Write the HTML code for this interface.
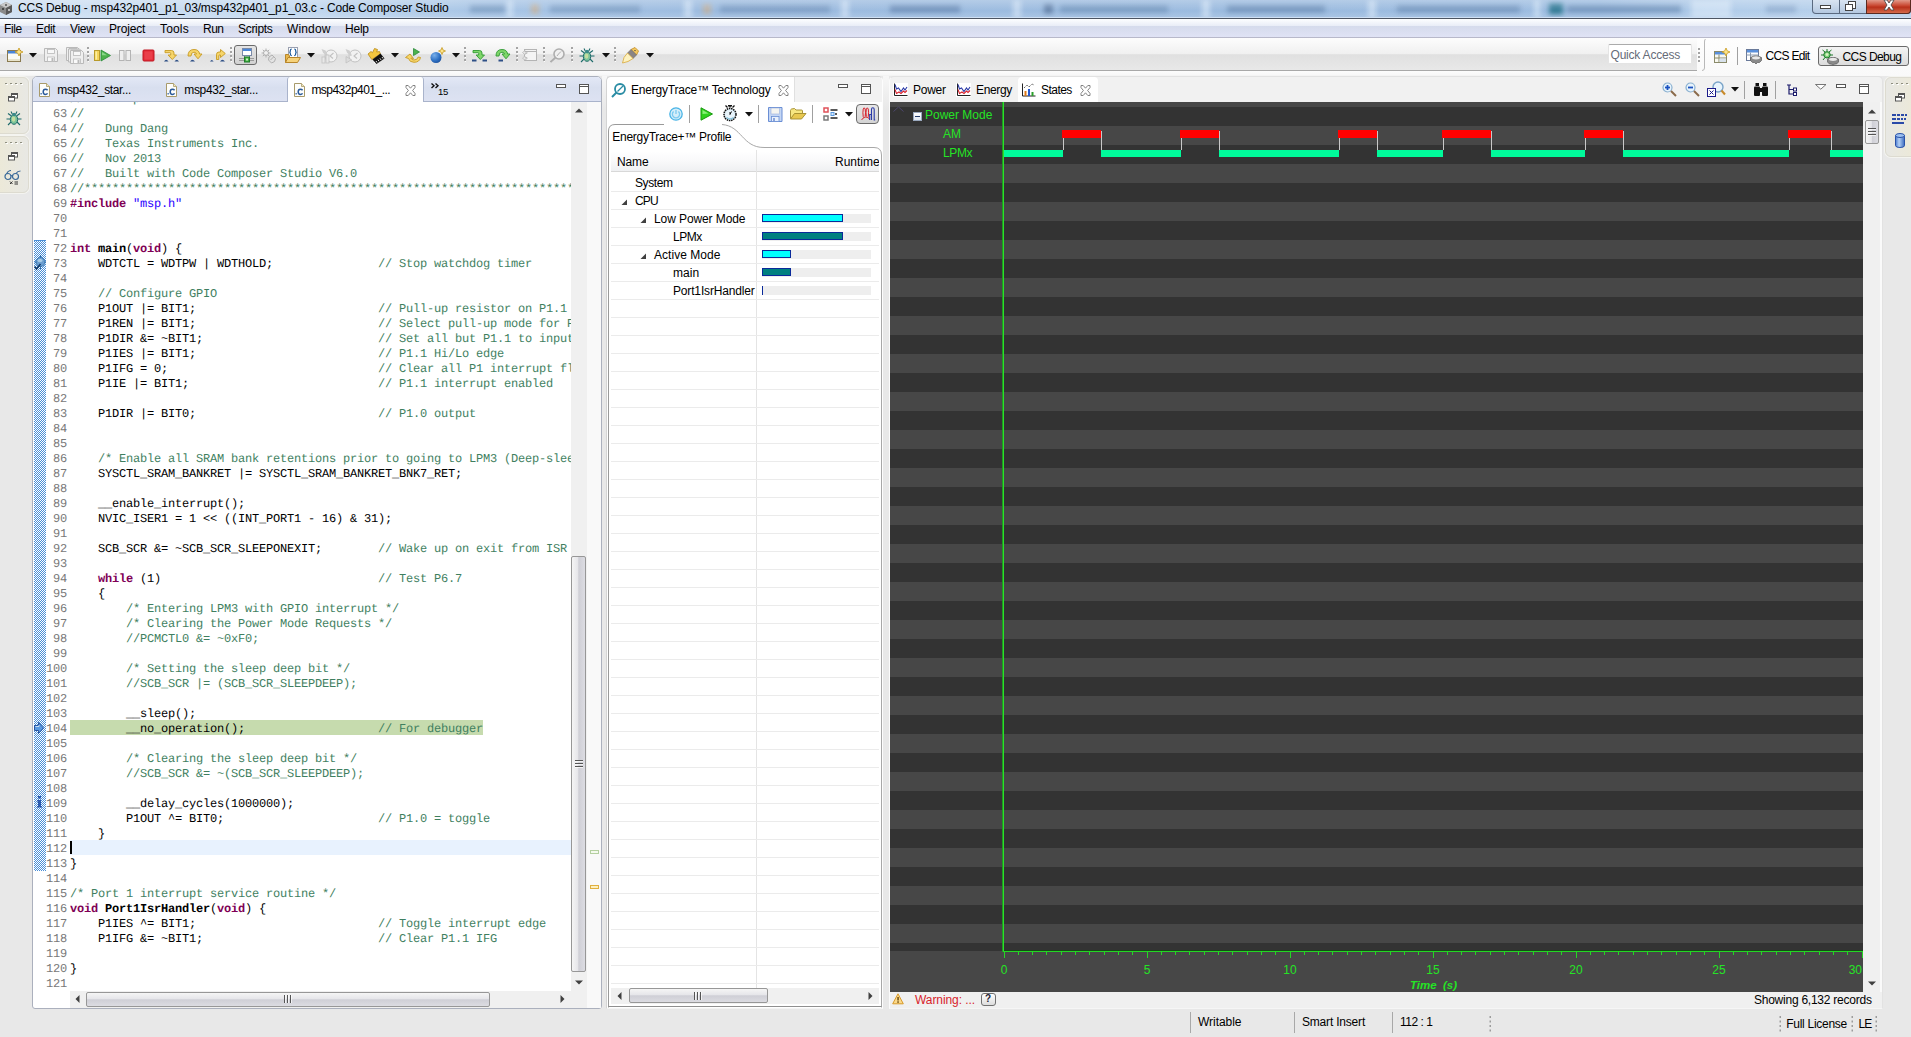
<!DOCTYPE html>
<html><head><meta charset="utf-8"><title>CCS Debug</title><style>
*{box-sizing:border-box;margin:0;padding:0}
html,body{width:1911px;height:1037px;overflow:hidden}
body{position:relative;background:#e8e8e8;font-family:"Liberation Sans",sans-serif;font-size:12px;color:#000}
div,svg{position:absolute}
.t{white-space:nowrap;line-height:14px;font-size:12px}
/* title */
#title{left:0;top:0;width:1911px;height:18px;background:linear-gradient(90deg,#cfe0f2 0,#c2d8ef 300px,#a9c6e6 470px,#9dbce0 700px,#9bbbdf 1300px,#9dbde1 1600px,#b2cdea 1740px,#b9d2ec 1911px);overflow:hidden}
#tline{left:0;top:17px;width:1911px;height:2px;background:linear-gradient(#cfe0f4 50%,#4c5563 50%)}
#menu{left:0;top:19px;width:1911px;height:19px;background:linear-gradient(#fdfeff 0,#e9edf7 38%,#d5dbec 40%,#e0e3f5 100%);border-bottom:1px solid #b8b9ca}
#tool{left:0;top:38px;width:1697px;height:33px;background:linear-gradient(#fdfdfd 0,#f0f0f0 50%,#e0e0e0 52%,#e8e8e8 100%);border-bottom:1px solid #a8a8a8}
#toolw{left:0;top:71px;width:1911px;height:5px;background:linear-gradient(#fcfcfc,#f8f8f8 70%,#f2f2f2)}
/* code */
#code{left:46px;top:102px;width:525px;height:889px;overflow:hidden;background:#fff;font-family:"Liberation Mono",monospace;font-size:12px;letter-spacing:-0.2px;text-rendering:geometricPrecision;white-space:pre}
.ln{left:0;width:525px;height:15px;line-height:19px;overflow:hidden}
.ln.cur .tx{background:#e8f2fe}
.no{display:inline-block;width:21px;height:15px;text-align:right;color:#787878;vertical-align:top}
.tx{display:inline-block;width:501px;height:15px;margin-left:3px;vertical-align:top;overflow:hidden}
.c{color:#3f7f5f}.k{color:#7f0055;font-weight:bold}.s{color:#2a00ff}
.hl{background:#c6dbae;display:inline-block;height:15px;vertical-align:top}
/* chart */
#chart{left:890px;top:102px;width:973px;height:890px;background:#474747;overflow:hidden;font-size:12px}
.dk{left:0;width:973px;background:#333}
.rd{top:28px;height:8px;background:#ff0000}
.gn{top:48px;height:7px;background:#00fa9a}
.cn{width:1px;background:#c8c8c8}
.vline{left:112px;top:0;width:2px;height:850px;background:linear-gradient(90deg,#1f9a1f 50%,#2be02b 50%)}
.axis{left:113px;top:849px;width:860px;height:1px;background:#24d624}
.tk{top:849px;width:1px;background:#24d624}
.tl{top:861px;width:40px;text-align:center;color:#25e425;font-size:12px;line-height:14px}
.tt{left:520px;top:876px;color:#25e425;font-weight:bold;font-style:italic;font-size:11.5px;line-height:14px;white-space:nowrap}
.lb{color:#25e425;font-size:12px;line-height:14px;white-space:nowrap}
.thumbv{border:1px solid #979797;border-radius:2px;background:linear-gradient(90deg,#f5f5f5,#e6e6ea 45%,#cfcfd6 52%,#dcdce2)}
.thumbh{border:1px solid #979797;border-radius:2px;background:linear-gradient(#f5f5f5,#e6e6ea 45%,#cfcfd6 52%,#dcdce2)}
.row{left:611px;width:268px;height:1px;background:#ebebeb}

</style></head><body>
<div id="title">
<div style="left:0;top:0;width:1911px;height:18px;filter:blur(2.5px)">
<div style="left:470px;top:5px;width:35px;height:8px;background:rgba(70,105,150,0.35)"></div>
<div style="left:550px;top:5px;width:90px;height:8px;background:rgba(70,105,150,0.3)"></div>
<div style="left:720px;top:5px;width:110px;height:8px;background:rgba(70,105,150,0.32)"></div>
<div style="left:890px;top:5px;width:70px;height:8px;background:rgba(70,105,150,0.45)"></div>
<div style="left:1060px;top:5px;width:108px;height:8px;background:rgba(70,105,150,0.35)"></div>
<div style="left:1227px;top:5px;width:98px;height:8px;background:rgba(70,105,150,0.4)"></div>
<div style="left:1397px;top:5px;width:123px;height:8px;background:rgba(70,105,150,0.38)"></div>
<div style="left:1567px;top:5px;width:114px;height:8px;background:rgba(70,105,150,0.42)"></div>
<div style="left:1766px;top:5px;width:30px;height:8px;background:rgba(70,105,150,0.25)"></div>
<div style="left:507px;top:0px;width:6px;height:18px;background:rgba(225,238,252,.55)"></div>
<div style="left:684px;top:0px;width:8px;height:18px;background:rgba(225,238,252,.55)"></div>
<div style="left:841px;top:0px;width:8px;height:18px;background:rgba(225,238,252,.55)"></div>
<div style="left:1013px;top:0px;width:8px;height:18px;background:rgba(225,238,252,.55)"></div>
<div style="left:1202px;top:0px;width:8px;height:18px;background:rgba(225,238,252,.55)"></div>
<div style="left:1368px;top:0px;width:8px;height:18px;background:rgba(225,238,252,.55)"></div>
<div style="left:1534px;top:0px;width:6px;height:18px;background:rgba(225,238,252,.55)"></div>
<div style="left:1691px;top:0px;width:40px;height:18px;background:rgba(225,238,252,.55)"></div>
<div style="left:531px;top:4px;width:8px;height:10px;background:rgba(220,170,110,.5)"></div>
<div style="left:703px;top:4px;width:8px;height:10px;background:rgba(220,170,110,.5)"></div>
<div style="left:1044px;top:4px;width:9px;height:10px;background:rgba(60,90,130,.55)"></div>
<div style="left:1549px;top:3px;width:14px;height:12px;background:rgba(30,110,135,.8)"></div>
</div>
<div style="left:0px;top:0px;width:1911px;height:18px;background:linear-gradient(rgba(255,255,255,.25),rgba(255,255,255,0) 60%,rgba(255,255,255,.15))"></div>
<svg style="left:0px;top:1px" width="14" height="15" viewBox="0 0 14 15"><path d="M0 4 L6 1 L12 4 L12 11 L6 14 L0 11Z" fill="#8a8a8a"/><path d="M0 4 L6 7 L12 4 L6 1Z" fill="#c8c8c8"/><path d="M6 7 L6 14 L12 11 L12 4Z" fill="#5a5a5a"/><circle cx="3" cy="8" r="1" fill="#333"/><circle cx="9" cy="9" r="1" fill="#ddd"/><circle cx="6" cy="4" r="1" fill="#555"/></svg>
<div class="t" style="left:18px;top:1px;letter-spacing:-0.160px;">CCS Debug - msp432p401_p1_03/msp432p401_p1_03.c - Code Composer Studio</div>
<div style="left:1812px;top:0px;width:99px;height:14px;border:1px solid #5a6a80;border-top:0;border-radius:0 0 4px 4px;background:linear-gradient(#d9e4f1,#b4c8e0)"></div>
<div style="left:1839px;top:0px;width:1px;height:14px;background:#5a6a80"></div>
<div style="left:1866px;top:0px;width:45px;height:14px;border:1px solid #5a2a20;border-top:0;border-radius:0 0 4px 0;background:linear-gradient(#e29a8a,#c8452e 45%,#b8301a 55%,#d46a4a)"></div>
<div style="left:1820px;top:5px;width:11px;height:4px;border:1px solid #444;background:#fff"></div>
<div style="left:1848px;top:1px;width:8px;height:8px;border:1px solid #444;background:#fff"></div>
<div style="left:1845px;top:4px;width:8px;height:7px;border:1px solid #444;background:#fff"></div>
<svg style="left:1883px;top:0px" width="12" height="11" viewBox="0 0 12 11"><path d="M1 0 L4 0 L6 3 L8 0 L11 0 L8 5 L11 10 L8 10 L6 7 L4 10 L1 10 L4 5Z" fill="#fff" stroke="#444" stroke-width=".8"/></svg>
</div><div id="tline"></div>
<div id="menu">
<div class="t" style="left:4px;top:3px;letter-spacing:-0.400px;">File</div>
<div class="t" style="left:36px;top:3px;letter-spacing:-0.325px;">Edit</div>
<div class="t" style="left:70px;top:3px;letter-spacing:-0.325px;">View</div>
<div class="t" style="left:109px;top:3px;letter-spacing:-0.171px;">Project</div>
<div class="t" style="left:160px;top:3px;letter-spacing:0.160px;">Tools</div>
<div class="t" style="left:203px;top:3px;letter-spacing:-0.533px;">Run</div>
<div class="t" style="left:238px;top:3px;letter-spacing:-0.314px;">Scripts</div>
<div class="t" style="left:287px;top:3px;letter-spacing:0.150px;">Window</div>
<div class="t" style="left:345px;top:3px;letter-spacing:-0.225px;">Help</div>
</div>
<div id="tool">
<svg style="left:7px;top:10px" width="16" height="15" viewBox="0 0 16 15"><rect x="0.5" y="2.5" width="13" height="11" fill="#fbfbf4" stroke="#8a7a50"/><rect x="1" y="3" width="12" height="2.5" fill="#4a86d8"/><rect x="1" y="11" width="12" height="2" fill="#e8e4cc"/><path d="M12 0 L13.2 2.8 L16 4 L13.2 5.2 L12 8 L10.8 5.2 L8 4 L10.8 2.8Z" fill="#fce48a" stroke="#c89a20" stroke-width=".8"/></svg>
<svg style="left:29px;top:15px" width="8" height="5" viewBox="0 0 8 5"><path d="M0 0 L8 0 L4 4.5Z" fill="#111"/></svg>
<svg style="left:44px;top:10px" width="16" height="16" viewBox="0 0 16 16"><path d="M0.5 0.5 h11 l2 2 v11 h-13z" fill="#efefef" stroke="#b9b9b9"/><rect x="3.5" y="1.5" width="7" height="4" fill="#f8f8f8" stroke="#b9b9b9" stroke-width=".8"/><rect x="3.5" y="9" width="7" height="4.5" fill="#fafafa" stroke="#b9b9b9" stroke-width=".8"/><rect x="7.5" y="10" width="2" height="3" fill="#b9b9b9"/></svg>
<svg style="left:66px;top:9px" width="18" height="18" viewBox="0 0 18 18"><path d="M0.5 0.5 h11 l2 2 v11 h-13z" fill="#efefef" stroke="#b9b9b9"/><rect x="3.5" y="1.5" width="7" height="4" fill="#f8f8f8" stroke="#b9b9b9" stroke-width=".8"/><rect x="3.5" y="9" width="7" height="4.5" fill="#fafafa" stroke="#b9b9b9" stroke-width=".8"/><rect x="7.5" y="10" width="2" height="3" fill="#b9b9b9"/><path d="M2.5 2 h11 l2 2 v11 h-13z" fill="#efefef" stroke="#b9b9b9"/><rect x="5.5" y="3" width="7" height="4" fill="#f8f8f8" stroke="#b9b9b9" stroke-width=".8"/><rect x="5.5" y="10.5" width="7" height="4.5" fill="#fafafa" stroke="#b9b9b9" stroke-width=".8"/><rect x="9.5" y="11.5" width="2" height="3" fill="#b9b9b9"/><path d="M4.5 3.5 h11 l2 2 v11 h-13z" fill="#efefef" stroke="#b9b9b9"/><rect x="7.5" y="4.5" width="7" height="4" fill="#f8f8f8" stroke="#b9b9b9" stroke-width=".8"/><rect x="7.5" y="12" width="7" height="4.5" fill="#fafafa" stroke="#b9b9b9" stroke-width=".8"/><rect x="11.5" y="13" width="2" height="3" fill="#b9b9b9"/></svg>
<svg style="left:87px;top:9px" width="3" height="16" viewBox="0 0 3 16"><rect x="0" y="0" width="2" height="2" fill="#a4a4a4"/><rect x="1" y="2" width="1" height="1" fill="#fff"/><rect x="0" y="4" width="2" height="2" fill="#a4a4a4"/><rect x="1" y="6" width="1" height="1" fill="#fff"/><rect x="0" y="8" width="2" height="2" fill="#a4a4a4"/><rect x="1" y="10" width="1" height="1" fill="#fff"/><rect x="0" y="12" width="2" height="2" fill="#a4a4a4"/><rect x="1" y="14" width="1" height="1" fill="#fff"/></svg>
<svg style="left:94px;top:11px" width="18" height="13" viewBox="0 0 18 13"><rect x="0.5" y="1.5" width="5" height="10" fill="#f4d45a" stroke="#b89a2a"/><rect x="1.5" y="2.5" width="1.5" height="8" fill="#fbeea0"/><path d="M7 1 L16.5 6.5 L7 12Z" fill="#4cb24c" stroke="#2a8a3a" stroke-width=".8"/><path d="M8 3 L13 6.3 L8 6.3Z" fill="#8ad88a"/></svg>
<svg style="left:119px;top:11px" width="13" height="13" viewBox="0 0 13 13"><rect x="0.5" y="1.5" width="4.5" height="10" fill="#efefef" stroke="#b4b4b4"/><rect x="7" y="1.5" width="4.5" height="10" fill="#efefef" stroke="#b4b4b4"/></svg>
<svg style="left:142px;top:11px" width="14" height="14" viewBox="0 0 14 14"><rect x="1" y="1" width="11" height="11" rx="1" fill="#e42a36" stroke="#c01824" stroke-width="1"/><rect x="2.500" y="2.500" width="8" height="8" fill="#ea3f4a"/></svg>
<svg style="left:164px;top:10px" width="16" height="15" viewBox="0 0 16 15"><path d="M1 2.5 h6.5 q2.5 0 2.5 2.5 v2 h2.5 l-4.2 4.5 l-4.2 -4.5 h2.6 v-1.5 q0 -.8 -.8 -.8 h-4.9z" fill="#f6d56a" stroke="#c79a22" stroke-width=".9" stroke-linejoin="round"/><path d="M0 13.500 q2.200 -3.600 4.500 0z M10.500 13.500 q2.200 -3.600 4.500 0z" fill="#2d4f86"/></svg>
<svg style="left:187px;top:10px" width="16" height="15" viewBox="0 0 16 15"><path d="M1 8 q0 -6.5 6 -6.5 q5 0 5.6 4.5 h2.4 l-4 4.8 l-4 -4.8 h2.5 q-.5 -1.8 -2.5 -1.8 q-3 0 -3 3.8z" fill="#f6d56a" stroke="#c79a22" stroke-width=".9" stroke-linejoin="round"/><path d="M3 13.500 q2.400 -3.600 5 0z" fill="#2d4f86"/></svg>
<svg style="left:210px;top:10px" width="16" height="15" viewBox="0 0 16 15"><path d="M6.5 11.5 v-5 q0 -2.5 2.5 -2.5 h1.5 v-2.5 l4.8 4 l-4.8 4 v-2.5 h-1 q-.7 0 -.7 .8 v3.7z" fill="#f6d56a" stroke="#c79a22" stroke-width=".9" stroke-linejoin="round"/><path d="M0 13.500 q1.800 -3 3.600 0z M10 13.500 q2.400 -3.600 5 0z" fill="#2d4f86"/></svg>
<svg style="left:230px;top:9px" width="3" height="16" viewBox="0 0 3 16"><rect x="0" y="0" width="2" height="2" fill="#a4a4a4"/><rect x="1" y="2" width="1" height="1" fill="#fff"/><rect x="0" y="4" width="2" height="2" fill="#a4a4a4"/><rect x="1" y="6" width="1" height="1" fill="#fff"/><rect x="0" y="8" width="2" height="2" fill="#a4a4a4"/><rect x="1" y="10" width="1" height="1" fill="#fff"/><rect x="0" y="12" width="2" height="2" fill="#a4a4a4"/><rect x="1" y="14" width="1" height="1" fill="#fff"/></svg>
<div style="left:234px;top:7px;width:23px;height:20px;border:1px solid #6a6a6a;border-radius:3px;background:linear-gradient(#e4e4e4,#d2d2d2)"></div>
<svg style="left:239px;top:10px" width="15" height="15" viewBox="0 0 15 15"><rect x="3.5" y="0.5" width="9" height="7" fill="#fff" stroke="#7a8aa8"/><rect x="4" y="1" width="8" height="2" fill="#4a86d8"/><path d="M5.5 7.5 v3 M10.5 7.5 v3" stroke="#7a8aa8"/><path d="M0 10.5 h15 M0 12.5 h15" stroke="#8a8a8a" stroke-width=".8"/><rect x="5.5" y="9" width="5" height="5" fill="#3fae3f" stroke="#1f7a2a"/><rect x="7" y="10.5" width="2" height="2" fill="#c8f0c0"/></svg>
<svg style="left:261px;top:10px" width="16" height="16" viewBox="0 0 16 16"><g fill="none" stroke="#b0b0b0" stroke-width="1"><circle cx="5" cy="5" r="2.5"/><path d="M5 0.5 v2 M5 7.5 v2 M0.5 5 h2 M7.5 5 h2 M1.8 1.8 l1.4 1.4 M6.8 6.8 l1.4 1.4 M8.2 1.8 l-1.4 1.4 M1.8 8.2 l1.4 -1.4"/><path d="M8 9 l3 -2 l3.5 3.5 l-1 3 l-3 1.5 l-3 -3z"/><path d="M9.5 12 l3 -3"/></g></svg>
<svg style="left:285px;top:9px" width="16" height="17" viewBox="0 0 16 17"><rect x="3.5" y="0.5" width="9" height="10" fill="#fff" stroke="#9aa0b0"/><path d="M6.8 2 q-1.5 0 -1.5 1.5 v.8 q0 1 -1 1 q1 0 1 1 v.8 q0 1.5 1.5 1.5" fill="none" stroke="#1c5a9a" stroke-width="1.2"/><path d="M9.2 2 q1.5 0 1.5 1.5 v.8 q0 1 1 1 q-1 0 -1 1 v.8 q0 1.5 -1.5 1.5" fill="none" stroke="#1c5a9a" stroke-width="1.2"/><path d="M0.5 15.500 v-8 h3 l1 1.5 h0 v6.5z" fill="#e8b84a" stroke="#b8862a"/><path d="M0.5 15.500 l2.500 -5 h12.500 l-3 5z" fill="#f6d27a" stroke="#b8862a" stroke-linejoin="round"/></svg>
<svg style="left:307px;top:15px" width="8" height="5" viewBox="0 0 8 5"><path d="M0 0 L8 0 L4 4.5Z" fill="#111"/></svg>
<svg style="left:321px;top:10px" width="17" height="16" viewBox="0 0 17 16"><g fill="#f2f2f2" stroke="#c2c2c2" stroke-width="1"><circle cx="10" cy="8" r="6"/></g><path d="M12.500 5 l-3.500 3 l3 2.500" fill="none" stroke="#c2c2c2" stroke-width="1.1"/><path d="M0.5 1 l4 1.500 l2.500 5 l-2 .5 l-3 -3.500z" fill="#cfcfcf"/><rect x="1" y="9" width="3" height="6" fill="#e8e8e8" stroke="#c2c2c2" stroke-width=".8"/><rect x="5" y="7" width="3" height="8" fill="#e8e8e8" stroke="#c2c2c2" stroke-width=".8"/></svg>
<svg style="left:345px;top:10px" width="17" height="16" viewBox="0 0 17 16"><g fill="#f2f2f2" stroke="#c2c2c2" stroke-width="1"><circle cx="10" cy="8" r="6"/></g><path d="M12.500 5 l-3.500 3 l3 2.500" fill="none" stroke="#c2c2c2" stroke-width="1.1"/><path d="M0.5 1 l4 1.500 l2.500 5 l-2 .5 l-3 -3.500z" fill="#cfcfcf"/><path d="M1 8.500 l5.500 3.200 l-5.500 3.300z" fill="#dcdcdc" stroke="#c2c2c2" stroke-width=".8"/></svg>
<svg style="left:367px;top:9px" width="18" height="18" viewBox="0 0 18 18"><path d="M1 7 l3 -2.500 l1.500 1.200 l2 -4.200 l3 1 l-.8 2.500 l2.800 -.5 l.8 2.500 l-8.500 5.500z" fill="#f3c63f" stroke="#b98a16" stroke-width=".8"/><path d="M5.500 12.500 l8 -6 l4 5 l-8 5.500z" fill="#111"/><path d="M7 15 l1 1.500 M9 14 l1 1.500 M11 12.700 l1 1.500 M13 11.400 l1 1.500 M15 10 l1 1.500" stroke="#fff" stroke-width=".9"/></svg>
<svg style="left:391px;top:15px" width="8" height="5" viewBox="0 0 8 5"><path d="M0 0 L8 0 L4 4.5Z" fill="#111"/></svg>
<svg style="left:405px;top:9px" width="17" height="18" viewBox="0 0 17 18"><path d="M8.500 1.500 l6 3.500 l-6 3.500z" fill="#4cb24c" stroke="#2a8a3a" stroke-width=".8"/><path d="M5 7 l-4.500 3.500 l3 1 q1 3.800 5.500 3.800 q5.500 0 6.500 -4.800 l-2.300 -.5 q-.8 3 -4.200 3 q-2.500 0 -3.200 -2 l2.700 .5z" fill="#f6d56a" stroke="#c79a22" stroke-width=".9" stroke-linejoin="round"/></svg>
<svg style="left:430px;top:9px" width="16" height="17" viewBox="0 0 16 17"><defs><radialGradient id="bb" cx=".35" cy=".3" r=".8"><stop offset="0" stop-color="#7ab0ea"/><stop offset=".6" stop-color="#2f72c4"/><stop offset="1" stop-color="#1a4e9a"/></radialGradient></defs><circle cx="6" cy="10.500" r="5.500" fill="url(#bb)"/><path d="M12 0.500 l1 2.500 l2.500 1 l-2.500 1 l-1 2.500 l-1 -2.500 l-2.500 -1 l2.500 -1z" fill="#fce48a" stroke="#c89a20" stroke-width=".8"/></svg>
<svg style="left:452px;top:15px" width="8" height="5" viewBox="0 0 8 5"><path d="M0 0 L8 0 L4 4.5Z" fill="#111"/></svg>
<svg style="left:464px;top:9px" width="3" height="16" viewBox="0 0 3 16"><rect x="0" y="0" width="2" height="2" fill="#a4a4a4"/><rect x="1" y="2" width="1" height="1" fill="#fff"/><rect x="0" y="4" width="2" height="2" fill="#a4a4a4"/><rect x="1" y="6" width="1" height="1" fill="#fff"/><rect x="0" y="8" width="2" height="2" fill="#a4a4a4"/><rect x="1" y="10" width="1" height="1" fill="#fff"/><rect x="0" y="12" width="2" height="2" fill="#a4a4a4"/><rect x="1" y="14" width="1" height="1" fill="#fff"/></svg>
<svg style="left:472px;top:10px" width="16" height="15" viewBox="0 0 16 15"><path d="M1 2.5 h6.5 q2.5 0 2.5 2.5 v2 h2.5 l-4.2 4.5 l-4.2 -4.5 h2.6 v-1.5 q0 -.8 -.8 -.8 h-4.9z" fill="#7fd66a" stroke="#2f9a32" stroke-width=".9" stroke-linejoin="round"/><path d="M0 11.500 h4.500 v2 h-4.500z M10.500 11.500 h4.500 v2 h-4.500z" fill="#2d4f86"/></svg>
<svg style="left:495px;top:10px" width="16" height="15" viewBox="0 0 16 15"><path d="M1 8 q0 -6.5 6 -6.5 q5 0 5.6 4.5 h2.4 l-4 4.8 l-4 -4.8 h2.5 q-.5 -1.8 -2.5 -1.8 q-3 0 -3 3.8z" fill="#7fd66a" stroke="#2f9a32" stroke-width=".9" stroke-linejoin="round"/><path d="M3.500 11.500 h4.500 v2 h-4.500z" fill="#2d4f86"/></svg>
<svg style="left:516px;top:9px" width="3" height="16" viewBox="0 0 3 16"><rect x="0" y="0" width="2" height="2" fill="#a4a4a4"/><rect x="1" y="2" width="1" height="1" fill="#fff"/><rect x="0" y="4" width="2" height="2" fill="#a4a4a4"/><rect x="1" y="6" width="1" height="1" fill="#fff"/><rect x="0" y="8" width="2" height="2" fill="#a4a4a4"/><rect x="1" y="10" width="1" height="1" fill="#fff"/><rect x="0" y="12" width="2" height="2" fill="#a4a4a4"/><rect x="1" y="14" width="1" height="1" fill="#fff"/></svg>
<svg style="left:522px;top:10px" width="16" height="15" viewBox="0 0 16 15"><rect x="2.500" y="1.500" width="12" height="11" fill="#f4f4f4" stroke="#b4b4b4"/><path d="M2.500 3.500 h12" stroke="#b4b4b4"/><path d="M0.5 4.500 l2.500 -2 v1.500 h2 v1.500 h-2 v1.500z M0.5 10 l2.500 -2 v1.500 h2 v1.500 h-2 v1.500z" fill="#e8e8e8" stroke="#b4b4b4" stroke-width=".7"/></svg>
<svg style="left:543px;top:9px" width="3" height="16" viewBox="0 0 3 16"><rect x="0" y="0" width="2" height="2" fill="#a4a4a4"/><rect x="1" y="2" width="1" height="1" fill="#fff"/><rect x="0" y="4" width="2" height="2" fill="#a4a4a4"/><rect x="1" y="6" width="1" height="1" fill="#fff"/><rect x="0" y="8" width="2" height="2" fill="#a4a4a4"/><rect x="1" y="10" width="1" height="1" fill="#fff"/><rect x="0" y="12" width="2" height="2" fill="#a4a4a4"/><rect x="1" y="14" width="1" height="1" fill="#fff"/></svg>
<svg style="left:550px;top:10px" width="16" height="15" viewBox="0 0 16 15"><circle cx="9" cy="6" r="5" fill="#f0f0f0" stroke="#adadad" stroke-width="1.600"/><path d="M5.500 9.500 l-5 4.500" stroke="#adadad" stroke-width="1.800"/><path d="M11 3.500 l-2.500 2.500 l-1.500 2" stroke="#adadad" stroke-width="1" fill="none"/></svg>
<svg style="left:571px;top:9px" width="3" height="16" viewBox="0 0 3 16"><rect x="0" y="0" width="2" height="2" fill="#a4a4a4"/><rect x="1" y="2" width="1" height="1" fill="#fff"/><rect x="0" y="4" width="2" height="2" fill="#a4a4a4"/><rect x="1" y="6" width="1" height="1" fill="#fff"/><rect x="0" y="8" width="2" height="2" fill="#a4a4a4"/><rect x="1" y="10" width="1" height="1" fill="#fff"/><rect x="0" y="12" width="2" height="2" fill="#a4a4a4"/><rect x="1" y="14" width="1" height="1" fill="#fff"/></svg>
<svg style="left:579px;top:10px" width="16" height="16" viewBox="0 0 16 16"><g stroke="#1d6a6a" stroke-width="1.100" fill="none"><path d="M5.500 5 l-3.500 -2.500 M10.500 5 l3.500 -2.500 M4.500 8 h-4 M11.500 8 h4 M5 11 l-3 3 M11 11 l3 3 M6.500 3.500 l-1.500 -3 M9.500 3.500 l1.500 -3"/></g><ellipse cx="8" cy="8.500" rx="3.700" ry="4.800" fill="#7cc49a" stroke="#1d6a6a" stroke-width="1"/><ellipse cx="7.600" cy="8" rx="1.800" ry="2.800" fill="#c4dca0"/><circle cx="8" cy="3.500" r="1.700" fill="#3a8a8a"/></svg>
<svg style="left:602px;top:15px" width="8" height="5" viewBox="0 0 8 5"><path d="M0 0 L8 0 L4 4.5Z" fill="#111"/></svg>
<svg style="left:614px;top:9px" width="3" height="16" viewBox="0 0 3 16"><rect x="0" y="0" width="2" height="2" fill="#a4a4a4"/><rect x="1" y="2" width="1" height="1" fill="#fff"/><rect x="0" y="4" width="2" height="2" fill="#a4a4a4"/><rect x="1" y="6" width="1" height="1" fill="#fff"/><rect x="0" y="8" width="2" height="2" fill="#a4a4a4"/><rect x="1" y="10" width="1" height="1" fill="#fff"/><rect x="0" y="12" width="2" height="2" fill="#a4a4a4"/><rect x="1" y="14" width="1" height="1" fill="#fff"/></svg>
<svg style="left:622px;top:9px" width="17" height="17" viewBox="0 0 17 17"><path d="M9 2.500 l4 -2 l3.500 3.500 l-2 4z" fill="#f4c860" stroke="#c08a1e" stroke-width=".8"/><path d="M9 2.500 l5.500 5.500 l-3.500 3.500 l-5.500 -5.500z" fill="#8a8484" stroke="#6a6464" stroke-width=".6"/><path d="M5.500 6 l5.500 5.500 l-5 3 l-5.500 1.500 l1.500 -5.500z" fill="#fdf2c0" stroke="#d8a838" stroke-width=".8"/><circle cx="13" cy="3.600" r=".7" fill="#333"/></svg>
<svg style="left:646px;top:15px" width="8" height="5" viewBox="0 0 8 5"><path d="M0 0 L8 0 L4 4.5Z" fill="#111"/></svg>
<div style="left:1608px;top:6px;width:84px;height:20px;background:#fff;border:1px solid #e4e4e4;border-top-color:#ababab;border-radius:2px"></div>
<div class="t" style="left:1610.5px;top:10px;letter-spacing:-0.208px;color:#666c78">Quick Access</div>
</div><div id="toolw"></div>
<div style="left:1697px;top:38px;width:214px;height:38px;background:linear-gradient(#fefefe,#f9f9f9)"></div>
<svg style="left:1697px;top:38px" width="10" height="34" viewBox="0 0 10 34"><path d="M8.500 1 Q7.500 1.500 7.500 4 V30 Q7.500 32.500 5 32.500" fill="none" stroke="#b8b8b8" stroke-width="1"/></svg>
<div style="left:0;top:38px;width:1911px;height:35px">
<svg style="left:1698px;top:10px" width="3" height="16" viewBox="0 0 3 16"><rect x="0" y="0" width="2" height="2" fill="#a4a4a4"/><rect x="1" y="2" width="1" height="1" fill="#fff"/><rect x="0" y="4" width="2" height="2" fill="#a4a4a4"/><rect x="1" y="6" width="1" height="1" fill="#fff"/><rect x="0" y="8" width="2" height="2" fill="#a4a4a4"/><rect x="1" y="10" width="1" height="1" fill="#fff"/><rect x="0" y="12" width="2" height="2" fill="#a4a4a4"/><rect x="1" y="14" width="1" height="1" fill="#fff"/></svg>
<div style="left:1737px;top:9px;width:1px;height:18px;background:#a0a0a0"></div>
<div class="t" style="left:1765.5px;top:11px;letter-spacing:-0.675px;">CCS Edit</div>
<div style="left:1818px;top:8px;width:91px;height:20px;border:1px solid #6a6a6a;border-radius:3px;background:linear-gradient(#f4f4f4,#dcdcdc)"></div>
<div class="t" style="left:1842.5px;top:12px;letter-spacing:-0.567px;">CCS Debug</div>
<svg style="left:1714px;top:10px" width="16" height="16" viewBox="0 0 16 16"><rect x="0.5" y="3.5" width="12" height="11" fill="#f8f8f0" stroke="#8a8a6a"/><rect x="1" y="4" width="11" height="2.5" fill="#5a90dc"/><path d="M0.5 10 h12 M5 6.500 v8" stroke="#8a8a6a"/><rect x="5.5" y="10.5" width="6.5" height="3.5" fill="#d8e2ec"/><path d="M12 0 l1.200 2.800 l2.800 1.200 l-2.800 1.200 l-1.200 2.800 l-1.200 -2.800 l-2.800 -1.200 l2.800 -1.200z" fill="#fce48a" stroke="#c89a20" stroke-width=".8"/></svg>
<svg style="left:1746px;top:11px" width="16" height="16" viewBox="0 0 16 16"><rect x="0.5" y="0.5" width="12" height="11" fill="#fdfdfd" stroke="#6a7a9a"/><rect x="1" y="1" width="11" height="2.500" fill="#5a90dc"/><path d="M0.5 6 h12 M4.500 3.500 v8" stroke="#8a9ab0"/><path d="M4.5 8.5 l3.500 -1.500 h4 l3.500 1.500 v3 l-2 2 h-2 l-1.500 1.500 l-1.500 -1.500 h-2 l-2 -2z" fill="#8a8a8a" stroke="#5a5a5a" stroke-width=".7"/><ellipse cx="10" cy="8.8" rx="4" ry="1.600" fill="#e8e8e8"/></svg>
<svg style="left:1821px;top:11px" width="18" height="17" viewBox="0 0 18 17"><g stroke="#1d7a2a" stroke-width="1" fill="none"><path d="M4 3 l-2.500 -2 M8 3 l2.500 -2 M3 6 h-3 M9 6 h3 M4 8.500 l-2 2.500 M8 8.500 l1 1.500 M6 2 v-2"/></g><circle cx="6" cy="5.800" r="3.200" fill="#7ad07a" stroke="#1d7a2a"/><circle cx="6" cy="5.500" r="1.500" fill="#d8f0c0"/><path d="M6.5 10 l3.500 -1.500 h4 l3.500 1.500 v3 l-2 2 h-2 l-1.500 1.500 l-1.500 -1.500 h-2 l-2 -2z" fill="#8a8a8a" stroke="#5a5a5a" stroke-width=".7"/><ellipse cx="12" cy="10.3" rx="4" ry="1.600" fill="#e8e8e8"/></svg>
</div>
<div style="left:-2px;top:77px;width:31px;height:57px;background:linear-gradient(90deg,#ece9d8,#e9e8e0 70%,#e8e8e4);border:1px solid #dddbd0;box-shadow:0 0 0 1px #f4f4f0;border-radius:0 6px 6px 0"></div>
<div style="left:-2px;top:136px;width:31px;height:57px;background:linear-gradient(90deg,#ece9d8,#e9e8e0 70%,#e8e8e4);border:1px solid #dddbd0;box-shadow:0 0 0 1px #f4f4f0;border-radius:0 6px 6px 0"></div>
<svg style="left:5px;top:83px" width="18" height="2" viewBox="0 0 18 2"><rect x="0" y="0" width="2" height="1" fill="#8e8e80"/><rect x="1" y="1" width="2" height="1" fill="#fff"/><rect x="5" y="0" width="2" height="1" fill="#8e8e80"/><rect x="6" y="1" width="2" height="1" fill="#fff"/><rect x="10" y="0" width="2" height="1" fill="#8e8e80"/><rect x="11" y="1" width="2" height="1" fill="#fff"/><rect x="15" y="0" width="2" height="1" fill="#8e8e80"/><rect x="16" y="1" width="2" height="1" fill="#fff"/></svg>
<svg style="left:8px;top:93px" width="10" height="9" viewBox="0 0 10 9"><rect x="3.5" y="0.5" width="6" height="4.5" fill="#fff" stroke="#555"/><path d="M3.5 1.5 h6" stroke="#555"/><rect x="0.5" y="3.5" width="6" height="4.5" fill="#fff" stroke="#555"/><path d="M0.5 4.5 h6" stroke="#555"/></svg>
<svg style="left:6px;top:111px" width="16" height="16" viewBox="0 0 16 16"><g stroke="#1d6a6a" stroke-width="1.100" fill="none"><path d="M5.500 5 l-3.500 -2.500 M10.500 5 l3.500 -2.500 M4.500 8 h-4 M11.500 8 h4 M5 11 l-3 3 M11 11 l3 3 M6.500 3.500 l-1.500 -3 M9.500 3.500 l1.500 -3"/></g><ellipse cx="8" cy="8.500" rx="3.700" ry="4.800" fill="#7cc49a" stroke="#1d6a6a" stroke-width="1"/><ellipse cx="7.600" cy="8" rx="1.800" ry="2.800" fill="#c4dca0"/><circle cx="8" cy="3.500" r="1.700" fill="#3a8a8a"/></svg>
<svg style="left:5px;top:142px" width="18" height="2" viewBox="0 0 18 2"><rect x="0" y="0" width="2" height="1" fill="#8e8e80"/><rect x="1" y="1" width="2" height="1" fill="#fff"/><rect x="5" y="0" width="2" height="1" fill="#8e8e80"/><rect x="6" y="1" width="2" height="1" fill="#fff"/><rect x="10" y="0" width="2" height="1" fill="#8e8e80"/><rect x="11" y="1" width="2" height="1" fill="#fff"/><rect x="15" y="0" width="2" height="1" fill="#8e8e80"/><rect x="16" y="1" width="2" height="1" fill="#fff"/></svg>
<svg style="left:8px;top:152px" width="10" height="9" viewBox="0 0 10 9"><rect x="3.5" y="0.5" width="6" height="4.5" fill="#fff" stroke="#555"/><path d="M3.5 1.5 h6" stroke="#555"/><rect x="0.5" y="3.5" width="6" height="4.5" fill="#fff" stroke="#555"/><path d="M0.5 4.5 h6" stroke="#555"/></svg>
<svg style="left:4px;top:170px" width="18" height="16" viewBox="0 0 18 16"><g fill="none" stroke="#3a6a9a" stroke-width="1.2"><circle cx="4" cy="6.5" r="3"/><circle cx="11.5" cy="6.5" r="3"/><path d="M7 6 q.8 -.8 1.600 0 M2.5 4 q1.500 -3.500 4.500 -3.500 M12 3.500 q1.500 -2.500 4.500 -2.500"/></g><path d="M6 11.500 l2.500 2.500 M8.500 11.500 l-2.500 2.500" stroke="#333" stroke-width="1"/><path d="M10.500 12 h3.500 M10.500 14 h3.500" stroke="#333" stroke-width="1.200"/></svg>
<div style="left:32px;top:76px;width:570px;height:933px;background:#fff;border:1px solid #abb0bd;border-radius:5px 5px 3px 3px"></div>
<div style="left:33px;top:77px;width:568px;height:25px;background:linear-gradient(#e3e8f6,#d8dfef 45%,#dde2f2);border-bottom:1px solid #a9b3cb;border-radius:4px 4px 0 0"></div>
<div style="left:287px;top:77px;width:137px;height:25px;background:#fff;border:1px solid #a9b3cb;border-bottom:0;border-top:0;border-radius:3px 3px 0 0"></div>
<div class="t" style="left:57.3px;top:83px;letter-spacing:-0.357px;">msp432_star...</div>
<div class="t" style="left:184.3px;top:83px;letter-spacing:-0.357px;">msp432_star...</div>
<div class="t" style="left:311.4px;top:83px;letter-spacing:-0.529px;">msp432p401_...</div>
<svg style="left:39px;top:83px" width="12" height="14" viewBox="0 0 12 14"><path d="M0.5 0.5 h7 l3 3 v10 h-10z" fill="#fdfdfb" stroke="#a89a6a"/><path d="M7.5 0.5 v3 h3" fill="#f0e6c0" stroke="#a89a6a" stroke-width=".8"/><rect x="1.5" y="10" width="1.3" height="1.5" fill="#3a6aa8"/><path d="M8.6 7.2 q-.8 -1 -2.2 -1 q-2.2 0 -2.2 2.6 q0 2.600 2.2 2.600 q1.4 0 2.2 -1" fill="none" stroke="#2a5a9a" stroke-width="1.5"/></svg>
<svg style="left:166px;top:83px" width="12" height="14" viewBox="0 0 12 14"><path d="M0.5 0.5 h7 l3 3 v10 h-10z" fill="#fdfdfb" stroke="#a89a6a"/><path d="M7.5 0.5 v3 h3" fill="#f0e6c0" stroke="#a89a6a" stroke-width=".8"/><rect x="1.5" y="10" width="1.3" height="1.5" fill="#3a6aa8"/><path d="M8.6 7.2 q-.8 -1 -2.2 -1 q-2.2 0 -2.2 2.6 q0 2.600 2.2 2.600 q1.4 0 2.2 -1" fill="none" stroke="#2a5a9a" stroke-width="1.5"/></svg>
<svg style="left:294px;top:83px" width="12" height="14" viewBox="0 0 12 14"><path d="M0.5 0.5 h7 l3 3 v10 h-10z" fill="#fdfdfb" stroke="#a89a6a"/><path d="M7.5 0.5 v3 h3" fill="#f0e6c0" stroke="#a89a6a" stroke-width=".8"/><rect x="1.5" y="10" width="1.3" height="1.5" fill="#3a6aa8"/><path d="M8.6 7.2 q-.8 -1 -2.2 -1 q-2.2 0 -2.2 2.6 q0 2.600 2.2 2.600 q1.4 0 2.2 -1" fill="none" stroke="#2a5a9a" stroke-width="1.5"/></svg>
<svg style="left:405px;top:85px" width="11" height="11" viewBox="0 0 11 11"><path d="M1 0.5 L3.2 0.5 L5.5 3.2 L7.8 0.5 L10 0.5 L10 2.6 L7.6 5.5 L10 8.4 L10 10.5 L7.8 10.5 L5.5 7.8 L3.2 10.5 L1 10.5 L1 8.4 L3.4 5.5 L1 2.6Z" fill="#fff" stroke="#777" stroke-width=".9"/></svg>
<svg style="left:431px;top:83px" width="9" height="6" viewBox="0 0 9 6"><path d="M0.5 0.5 l2.5 2.3 l-2.5 2.3 M4.5 0.5 l2.5 2.3 l-2.5 2.3" fill="none" stroke="#111" stroke-width="1.4"/></svg>
<div class="t" style="left:438px;top:87px;font-size:9.5px;line-height:10px;letter-spacing:-.3px">15</div>
<svg style="left:556px;top:84px" width="11" height="5" viewBox="0 0 11 5"><rect x="0.5" y="0.5" width="9" height="3" fill="#fff" stroke="#555"/></svg>
<svg style="left:579px;top:84px" width="11" height="11" viewBox="0 0 11 11"><rect x="0.5" y="0.5" width="9" height="9" fill="#fff" stroke="#555"/><path d="M0.5 2.5 h9" stroke="#555"/></svg>
<div style="left:34px;top:240px;width:12px;height:631px;background:conic-gradient(#4a8fd8 25%,#fff 0 50%,#4a8fd8 0 75%,#fff 0) 0 0/2px 2px"></div>
<div style="left:34px;top:240px;width:12px;height:1px;background:#4a8fd8"></div>
<svg style="left:34px;top:255px" width="13" height="16" viewBox="0 0 13 16"><path d="M6.500 0 v14 M0.5 7 h12" stroke="#2a6aa8" stroke-width="1"/><circle cx="6.500" cy="7" r="4.500" fill="#6a9ed0" stroke="#2a6aa8" stroke-width=".8"/><ellipse cx="6" cy="5.500" rx="2.500" ry="1.800" fill="#a8cce8"/><path d="M0.5 11.500 l2 2.500 l4 -5" fill="none" stroke="#123a6a" stroke-width="1.600"/></svg>
<svg style="left:34px;top:722px" width="10" height="12" viewBox="0 0 10 12"><path d="M0.5 3.500 h4 v-3 l5 5.500 l-5 5.500 v-3 h-4z" fill="#5a9ae0" stroke="#1a4a9a" stroke-width=".9"/><path d="M1.500 4.500 h3.500 v-1.500" stroke="#c8e0f8" fill="none"/></svg>
<svg style="left:37px;top:796px" width="5" height="12" viewBox="0 0 5 12"><rect x="1" y="0" width="3" height="2.500" fill="#2a5ab0"/><rect x="0" y="4" width="4" height="1.500" fill="#2a5ab0"/><rect x="1" y="4" width="3" height="7" fill="#2a5ab0"/><rect x="0" y="10" width="5" height="1.500" fill="#2a5ab0"/></svg>
<div id="code">
<div class="ln" style="top:-12px"><span class="no">62</span><span class="tx"><span class="c">//      .p.</span></span></div>
<div class="ln" style="top:3px"><span class="no">63</span><span class="tx"><span class="c">//</span></span></div>
<div class="ln" style="top:18px"><span class="no">64</span><span class="tx"><span class="c">//   Dung Dang</span></span></div>
<div class="ln" style="top:33px"><span class="no">65</span><span class="tx"><span class="c">//   Texas Instruments Inc.</span></span></div>
<div class="ln" style="top:48px"><span class="no">66</span><span class="tx"><span class="c">//   Nov 2013</span></span></div>
<div class="ln" style="top:63px"><span class="no">67</span><span class="tx"><span class="c">//   Built with Code Composer Studio V6.0</span></span></div>
<div class="ln" style="top:78px"><span class="no">68</span><span class="tx"><span class="c">//******************************************************************************</span></span></div>
<div class="ln" style="top:93px"><span class="no">69</span><span class="tx"><span class="k">#include</span> <span class="s">"msp.h"</span></span></div>
<div class="ln" style="top:108px"><span class="no">70</span><span class="tx"></span></div>
<div class="ln" style="top:123px"><span class="no">71</span><span class="tx"></span></div>
<div class="ln" style="top:138px"><span class="no">72</span><span class="tx"><span class="k">int</span> <b>main</b>(<span class="k">void</span>) {</span></div>
<div class="ln" style="top:153px"><span class="no">73</span><span class="tx">    WDTCTL = WDTPW | WDTHOLD;               <span class="c">// Stop watchdog timer</span></span></div>
<div class="ln" style="top:168px"><span class="no">74</span><span class="tx"></span></div>
<div class="ln" style="top:183px"><span class="no">75</span><span class="tx">    <span class="c">// Configure GPIO</span></span></div>
<div class="ln" style="top:198px"><span class="no">76</span><span class="tx">    P1OUT |= BIT1;                          <span class="c">// Pull-up resistor on P1.1</span></span></div>
<div class="ln" style="top:213px"><span class="no">77</span><span class="tx">    P1REN |= BIT1;                          <span class="c">// Select pull-up mode for P1.1</span></span></div>
<div class="ln" style="top:228px"><span class="no">78</span><span class="tx">    P1DIR &amp;= ~BIT1;                         <span class="c">// Set all but P1.1 to input direction</span></span></div>
<div class="ln" style="top:243px"><span class="no">79</span><span class="tx">    P1IES |= BIT1;                          <span class="c">// P1.1 Hi/Lo edge</span></span></div>
<div class="ln" style="top:258px"><span class="no">80</span><span class="tx">    P1IFG = 0;                              <span class="c">// Clear all P1 interrupt flags</span></span></div>
<div class="ln" style="top:273px"><span class="no">81</span><span class="tx">    P1IE |= BIT1;                           <span class="c">// P1.1 interrupt enabled</span></span></div>
<div class="ln" style="top:288px"><span class="no">82</span><span class="tx"></span></div>
<div class="ln" style="top:303px"><span class="no">83</span><span class="tx">    P1DIR |= BIT0;                          <span class="c">// P1.0 output</span></span></div>
<div class="ln" style="top:318px"><span class="no">84</span><span class="tx"></span></div>
<div class="ln" style="top:333px"><span class="no">85</span><span class="tx"></span></div>
<div class="ln" style="top:348px"><span class="no">86</span><span class="tx">    <span class="c">/* Enable all SRAM bank retentions prior to going to LPM3 (Deep-sleep) */</span></span></div>
<div class="ln" style="top:363px"><span class="no">87</span><span class="tx">    SYSCTL_SRAM_BANKRET |= SYSCTL_SRAM_BANKRET_BNK7_RET;</span></div>
<div class="ln" style="top:378px"><span class="no">88</span><span class="tx"></span></div>
<div class="ln" style="top:393px"><span class="no">89</span><span class="tx">    __enable_interrupt();</span></div>
<div class="ln" style="top:408px"><span class="no">90</span><span class="tx">    NVIC_ISER1 = 1 &lt;&lt; ((INT_PORT1 - 16) &amp; 31);</span></div>
<div class="ln" style="top:423px"><span class="no">91</span><span class="tx"></span></div>
<div class="ln" style="top:438px"><span class="no">92</span><span class="tx">    SCB_SCR &amp;= ~SCB_SCR_SLEEPONEXIT;        <span class="c">// Wake up on exit from ISR</span></span></div>
<div class="ln" style="top:453px"><span class="no">93</span><span class="tx"></span></div>
<div class="ln" style="top:468px"><span class="no">94</span><span class="tx">    <span class="k">while</span> (1)                               <span class="c">// Test P6.7</span></span></div>
<div class="ln" style="top:483px"><span class="no">95</span><span class="tx">    {</span></div>
<div class="ln" style="top:498px"><span class="no">96</span><span class="tx">        <span class="c">/* Entering LPM3 with GPIO interrupt */</span></span></div>
<div class="ln" style="top:513px"><span class="no">97</span><span class="tx">        <span class="c">/* Clearing the Power Mode Requests */</span></span></div>
<div class="ln" style="top:528px"><span class="no">98</span><span class="tx">        <span class="c">//PCMCTL0 &amp;= ~0xF0;</span></span></div>
<div class="ln" style="top:543px"><span class="no">99</span><span class="tx"></span></div>
<div class="ln" style="top:558px"><span class="no">100</span><span class="tx">        <span class="c">/* Setting the sleep deep bit */</span></span></div>
<div class="ln" style="top:573px"><span class="no">101</span><span class="tx">        <span class="c">//SCB_SCR |= (SCB_SCR_SLEEPDEEP);</span></span></div>
<div class="ln" style="top:588px"><span class="no">102</span><span class="tx"></span></div>
<div class="ln" style="top:603px"><span class="no">103</span><span class="tx">        __sleep();</span></div>
<div class="ln" style="top:618px"><span class="no">104</span><span class="tx"><span class="hl">        __no_operation();                   <span class="c">// For debugger</span></span></span></div>
<div class="ln" style="top:633px"><span class="no">105</span><span class="tx"></span></div>
<div class="ln" style="top:648px"><span class="no">106</span><span class="tx">        <span class="c">/* Clearing the sleep deep bit */</span></span></div>
<div class="ln" style="top:663px"><span class="no">107</span><span class="tx">        <span class="c">//SCB_SCR &amp;= ~(SCB_SCR_SLEEPDEEP);</span></span></div>
<div class="ln" style="top:678px"><span class="no">108</span><span class="tx"></span></div>
<div class="ln" style="top:693px"><span class="no">109</span><span class="tx">        __delay_cycles(1000000);</span></div>
<div class="ln" style="top:708px"><span class="no">110</span><span class="tx">        P1OUT ^= BIT0;                      <span class="c">// P1.0 = toggle</span></span></div>
<div class="ln" style="top:723px"><span class="no">111</span><span class="tx">    }</span></div>
<div class="ln cur" style="top:738px"><span class="no">112</span><span class="tx"></span></div>
<div class="ln" style="top:753px"><span class="no">113</span><span class="tx">}</span></div>
<div class="ln" style="top:768px"><span class="no">114</span><span class="tx"></span></div>
<div class="ln" style="top:783px"><span class="no">115</span><span class="tx"><span class="c">/* Port 1 interrupt service routine */</span></span></div>
<div class="ln" style="top:798px"><span class="no">116</span><span class="tx"><span class="k">void</span> <b>Port1IsrHandler</b>(<span class="k">void</span>) {</span></div>
<div class="ln" style="top:813px"><span class="no">117</span><span class="tx">    P1IES ^= BIT1;                          <span class="c">// Toggle interrupt edge</span></span></div>
<div class="ln" style="top:828px"><span class="no">118</span><span class="tx">    P1IFG &amp;= ~BIT1;                         <span class="c">// Clear P1.1 IFG</span></span></div>
<div class="ln" style="top:843px"><span class="no">119</span><span class="tx"></span></div>
<div class="ln" style="top:858px"><span class="no">120</span><span class="tx">}</span></div>
<div class="ln" style="top:873px"><span class="no">121</span><span class="tx"></span></div>
</div>
<div style="left:70px;top:841px;width:2px;height:13px;background:#000"></div>
<div style="left:571px;top:102px;width:16px;height:889px;background:#f0f0f0"></div>
<div class="thumbv" style="left:571px;top:556px;width:15px;height:416px;"></div>
<svg style="left:575px;top:108px" width="8" height="5" viewBox="0 0 8 5"><path d="M0 4.5 L4 0.5 L8 4.5Z" fill="#404040"/></svg>
<svg style="left:575px;top:980px" width="8" height="5" viewBox="0 0 8 5"><path d="M0 0.5 L8 0.5 L4 4.5Z" fill="#404040"/></svg>
<svg style="left:575px;top:760px" width="8" height="8" viewBox="0 0 8 8"><path d="M0 0.5 h8 M0 3.5 h8 M0 6.5 h8" stroke="#555" stroke-width="1"/><path d="M0 1.5 h8 M0 4.5 h8 M0 7.5 h8" stroke="#fff" stroke-width="1" opacity=".7"/></svg>
<div style="left:587px;top:102px;width:14px;height:906px;background:#f9f9f9"></div>
<div style="left:590px;top:850px;width:9px;height:4px;border:1px solid #b4cfa0;background:#f4faee"></div>
<div style="left:590px;top:885px;width:9px;height:4px;border:1px solid #e0b040;background:#fdf0c0"></div>
<div style="left:70px;top:991px;width:501px;height:17px;background:#f0f0f0"></div>
<div style="left:571px;top:991px;width:16px;height:17px;background:#f0f0f0"></div>
<div class="thumbh" style="left:86px;top:992px;width:404px;height:15px;"></div>
<svg style="left:75px;top:995px" width="5" height="8" viewBox="0 0 5 8"><path d="M4.5 0 L0.5 4 L4.5 8Z" fill="#404040"/></svg>
<svg style="left:560px;top:995px" width="5" height="8" viewBox="0 0 5 8"><path d="M0.5 0 L4.5 4 L0.5 8Z" fill="#404040"/></svg>
<svg style="left:284px;top:995px" width="8" height="8" viewBox="0 0 8 8"><path d="M0.5 0 v8 M3.5 0 v8 M6.5 0 v8" stroke="#555" stroke-width="1"/><path d="M1.5 0 v8 M4.5 0 v8 M7.5 0 v8" stroke="#fff" stroke-width="1" opacity=".7"/></svg>
<div style="left:602px;top:76px;width:5px;height:34px;background:linear-gradient(#f7f7f7,#e8e8e8)"></div>
<div style="left:883px;top:76px;width:6px;height:34px;background:linear-gradient(#f7f7f7,#e8e8e8)"></div>
<div style="left:606px;top:76px;width:277px;height:933px;background:#fff;border:1px solid #d4d4d4;border-right-color:#fdfdfd;border-bottom-color:#f4f4f4;border-radius:5px 5px 0 0"></div>
<div style="left:795px;top:77px;width:87px;height:25px;background:#f2f2f2;border-radius:0 4px 0 0"></div>
<div style="left:794px;top:77px;width:1px;height:25px;background:#e0e0e0"></div>
<div class="t" style="left:631px;top:83px;letter-spacing:-0.196px;">EnergyTrace™ Technology</div>
<svg style="left:611px;top:83px" width="16" height="15" viewBox="0 0 16 15"><circle cx="9" cy="6" r="5" fill="#fff" stroke="#2a8ca4" stroke-width="1.800"/><path d="M5.500 9.500 l-4.500 4.500" stroke="#2a8ca4" stroke-width="2"/><path d="M6.500 8.500 l5.500 -5.500" stroke="#2a8ca4" stroke-width="1.300"/></svg>
<svg style="left:778px;top:85px" width="11" height="11" viewBox="0 0 11 11"><path d="M1 0.5 L3.2 0.5 L5.5 3.2 L7.8 0.5 L10 0.5 L10 2.6 L7.6 5.5 L10 8.4 L10 10.5 L7.8 10.5 L5.5 7.8 L3.2 10.5 L1 10.5 L1 8.4 L3.4 5.5 L1 2.6Z" fill="#fff" stroke="#777" stroke-width=".9"/></svg>
<svg style="left:838px;top:84px" width="11" height="5" viewBox="0 0 11 5"><rect x="0.5" y="0.5" width="9" height="3" fill="#fff" stroke="#555"/></svg>
<svg style="left:861px;top:84px" width="11" height="11" viewBox="0 0 11 11"><rect x="0.5" y="0.5" width="9" height="9" fill="#fff" stroke="#555"/><path d="M0.5 2.5 h9" stroke="#555"/></svg>
<svg style="left:669px;top:107px" width="14" height="14" viewBox="0 0 14 14"><circle cx="7" cy="7" r="6.200" fill="#d4eefa" stroke="#4ab4e6" stroke-width="1.300"/><path d="M4.600 4.500 a3.600 3.600 0 1 0 4.800 0" fill="none" stroke="#7ccaf0" stroke-width="1.300"/><path d="M7 3 v4" stroke="#7ccaf0" stroke-width="1.300"/></svg>
<div style="left:689px;top:105px;width:1px;height:18px;background:#a0a0a0"></div>
<svg style="left:700px;top:107px" width="14" height="14" viewBox="0 0 14 14"><path d="M1 0.800 L12.500 7 L1 13.200Z" fill="#2fd21f" stroke="#1a9a10" stroke-width="1" stroke-linejoin="round"/><path d="M2.500 3 L8.500 6.500 L2.500 7Z" fill="#8af07a"/></svg>
<svg style="left:722px;top:105px" width="16" height="17" viewBox="0 0 16 17"><path d="M5.500 2.500 l-2 -2 M10.500 2.500 l2 -2 M8 0.5 v2" stroke="#111" stroke-width="1.300"/><rect x="6" y="0" width="4" height="1.500" fill="#111"/><circle cx="8" cy="9.500" r="6" fill="#dceef8" stroke="#111" stroke-width="1.500" stroke-dasharray="1.500 .7"/><circle cx="8" cy="9.500" r="4.500" fill="#e8f4fb"/><path d="M8 9.500 l1.500 -3 M8 9.500 v-2.500" stroke="#111" stroke-width="1"/><path d="M4.500 12.500 q3.500 3 7 0" stroke="#8ac4dc" stroke-width="1.500" fill="none"/></svg>
<svg style="left:745px;top:112px" width="8" height="5" viewBox="0 0 8 5"><path d="M0 0 L8 0 L4 4.5Z" fill="#111"/></svg>
<div style="left:758px;top:105px;width:1px;height:18px;background:#a0a0a0"></div>
<svg style="left:768px;top:107px" width="15" height="15" viewBox="0 0 15 15"><path d="M0.5 0.5 h13.500 v14 h-13.500z" fill="#c4d6f4" stroke="#6a8ed4"/><rect x="3" y="1" width="8.500" height="6" fill="#f4f4f0" stroke="#9ab0dc" stroke-width=".6"/><rect x="3.500" y="9.500" width="7.500" height="5" fill="#e8f0fc" stroke="#6a8ed4" stroke-width=".8"/><rect x="5" y="11" width="2" height="3" fill="#8aa4dc"/></svg>
<svg style="left:790px;top:108px" width="17" height="12" viewBox="0 0 17 12"><path d="M0.5 10.500 v-8 q0 -1 1 -1.500 l3 -.5 l1.500 1.500 h5.500 q1 0 1 1 v2" fill="#f6e680" stroke="#a08a2a" stroke-width=".9"/><path d="M0.5 11 l4 -5.500 h11.500 l-4.500 5.500z" fill="#e8c850" stroke="#a08a2a" stroke-width=".9" stroke-linejoin="round"/></svg>
<div style="left:812px;top:105px;width:1px;height:18px;background:#a0a0a0"></div>
<svg style="left:823px;top:107px" width="15" height="14" viewBox="0 0 15 14"><rect x="1" y="1" width="4" height="4" fill="#fff" stroke="#e0525a" stroke-width="1.500"/><rect x="1" y="9" width="4" height="4" fill="#fff" stroke="#7a7a7a" stroke-width="1.500"/><path d="M7.500 3 h7 M7.500 11 h7" stroke="#222" stroke-width="1.300"/><rect x="8" y="5.500" width="3" height="3" fill="#d8e8fa" stroke="#5a9ae0" stroke-width="1"/><path d="M12 7 h2" stroke="#222" stroke-width="1.300"/></svg>
<svg style="left:845px;top:112px" width="8" height="5" viewBox="0 0 8 5"><path d="M0 0 L8 0 L4 4.5Z" fill="#111"/></svg>
<div style="left:856px;top:104px;width:23px;height:20px;border:1px solid #6a6a6a;border-radius:4px;background:linear-gradient(#e8e8e8,#d4d4d4)"></div>
<svg style="left:861px;top:107px" width="15" height="14" viewBox="0 0 15 14"><ellipse cx="3.200" cy="5.800" rx="1.300" ry="5" fill="none" stroke="#d8202c" stroke-width="1"/><ellipse cx="6.300" cy="5.800" rx="1.300" ry="5" fill="none" stroke="#d8202c" stroke-width="1"/><path d="M0.500 12.500 q1.500 0 2 -2 M4.500 10.500 q.5 1 1 0 M7.500 10.500 q.5 2 1.500 2" fill="none" stroke="#d8202c" stroke-width="1"/><path d="M8.700 13 v-5.500 h1.800 v5.500 M10.500 13 v-10.500 q0 -1.800 1.300 -1.800 q1.400 0 1.400 1.800 v10.500 h1" fill="none" stroke="#2a3aa8" stroke-width="1.100"/></svg>
<svg style="left:608px;top:124px" width="275" height="884" viewBox="0 0 275 884"><path d="M0.5 883.500 V7 Q0.5 0.5 7 0.5 H56" fill="none" stroke="#9a9a9a"/><path d="M114 0.5 C134 2 134 23.500 156 23.500 H266 Q273.500 23.500 273.500 31 V883.500" fill="none" stroke="#a8a8a8"/><path d="M0.5 882.500 H273.500" stroke="#8f8f8f"/></svg>
<div class="t" style="left:612.3px;top:130px;letter-spacing:-0.271px;">EnergyTrace+™ Profile</div>
<div style="left:611px;top:151px;width:268px;height:21px;background:linear-gradient(#fff,#f9f9fa 50%,#eff0f2);border-bottom:1px solid #d8d8d8"></div>
<div style="left:756px;top:150px;width:1px;height:838px;background:#e4e4e4"></div>
<div class="t" style="left:617px;top:155px;letter-spacing:-0.150px;">Name</div>
<div class="t" style="left:835px;top:155px;width:44px;overflow:hidden">Runtime</div>
<div class="row" style="top:191px"></div>
<div class="row" style="top:209px"></div>
<div class="row" style="top:227px"></div>
<div class="row" style="top:245px"></div>
<div class="row" style="top:263px"></div>
<div class="row" style="top:281px"></div>
<div class="row" style="top:299px"></div>
<div class="row" style="top:317px"></div>
<div class="row" style="top:335px"></div>
<div class="row" style="top:353px"></div>
<div class="row" style="top:371px"></div>
<div class="row" style="top:389px"></div>
<div class="row" style="top:407px"></div>
<div class="row" style="top:425px"></div>
<div class="row" style="top:443px"></div>
<div class="row" style="top:461px"></div>
<div class="row" style="top:479px"></div>
<div class="row" style="top:497px"></div>
<div class="row" style="top:515px"></div>
<div class="row" style="top:533px"></div>
<div class="row" style="top:551px"></div>
<div class="row" style="top:569px"></div>
<div class="row" style="top:587px"></div>
<div class="row" style="top:605px"></div>
<div class="row" style="top:623px"></div>
<div class="row" style="top:641px"></div>
<div class="row" style="top:659px"></div>
<div class="row" style="top:677px"></div>
<div class="row" style="top:695px"></div>
<div class="row" style="top:713px"></div>
<div class="row" style="top:731px"></div>
<div class="row" style="top:749px"></div>
<div class="row" style="top:767px"></div>
<div class="row" style="top:785px"></div>
<div class="row" style="top:803px"></div>
<div class="row" style="top:821px"></div>
<div class="row" style="top:839px"></div>
<div class="row" style="top:857px"></div>
<div class="row" style="top:875px"></div>
<div class="row" style="top:893px"></div>
<div class="row" style="top:911px"></div>
<div class="row" style="top:929px"></div>
<div class="row" style="top:947px"></div>
<div class="row" style="top:965px"></div>
<div class="row" style="top:983px"></div>
<div class="t" style="left:635px;top:176px;letter-spacing:-0.383px;">System</div>
<div class="t" style="left:635px;top:194px;letter-spacing:-0.800px;">CPU</div>
<svg style="left:621px;top:199px" width="7" height="7" viewBox="0 0 7 7"><path d="M6 0.5 L6 6 L0.5 6Z" fill="#404040"/></svg>
<div class="t" style="left:654px;top:212px;letter-spacing:-0.093px;">Low Power Mode</div>
<svg style="left:640px;top:217px" width="7" height="7" viewBox="0 0 7 7"><path d="M6 0.5 L6 6 L0.5 6Z" fill="#404040"/></svg>
<div class="t" style="left:673px;top:230px;letter-spacing:-0.450px;">LPMx</div>
<div class="t" style="left:654px;top:248px;letter-spacing:0.036px;">Active Mode</div>
<svg style="left:640px;top:253px" width="7" height="7" viewBox="0 0 7 7"><path d="M6 0.5 L6 6 L0.5 6Z" fill="#404040"/></svg>
<div class="t" style="left:673px;top:266px;letter-spacing:0.025px;">main</div>
<div class="t" style="left:673px;top:284px;letter-spacing:-0.160px;">Port1IsrHandler</div>
<div style="left:762px;top:214px;width:109px;height:9px;background:#eeeeee"></div>
<div style="left:762px;top:214px;width:81px;height:8px;background:#00ffff;border:1px solid #0a2a9a"></div>
<div style="left:762px;top:232px;width:109px;height:9px;background:#eeeeee"></div>
<div style="left:762px;top:232px;width:81px;height:8px;background:#008080;border:1px solid #0a2a9a"></div>
<div style="left:762px;top:250px;width:109px;height:9px;background:#eeeeee"></div>
<div style="left:762px;top:250px;width:29px;height:8px;background:#00ffff;border:1px solid #0a2a9a"></div>
<div style="left:762px;top:268px;width:109px;height:9px;background:#eeeeee"></div>
<div style="left:762px;top:268px;width:29px;height:8px;background:#008080;border:1px solid #0a2a9a"></div>
<div style="left:762px;top:286px;width:109px;height:9px;background:#eeeeee"></div>
<div style="left:762px;top:286px;width:1px;height:9px;background:#0a2a9a"></div>
<div style="left:611px;top:988px;width:268px;height:16px;background:#f0f0f0"></div>
<div class="thumbh" style="left:629px;top:988px;width:139px;height:15px;"></div>
<svg style="left:617px;top:992px" width="5" height="8" viewBox="0 0 5 8"><path d="M4.5 0 L0.5 4 L4.5 8Z" fill="#404040"/></svg>
<svg style="left:868px;top:992px" width="5" height="8" viewBox="0 0 5 8"><path d="M0.5 0 L4.5 4 L0.5 8Z" fill="#404040"/></svg>
<svg style="left:694px;top:992px" width="8" height="8" viewBox="0 0 8 8"><path d="M0.5 0 v8 M3.5 0 v8 M6.5 0 v8" stroke="#555" stroke-width="1"/><path d="M1.5 0 v8 M4.5 0 v8 M7.5 0 v8" stroke="#fff" stroke-width="1" opacity=".7"/></svg>
<div style="left:889px;top:76px;width:994px;height:933px;background:#f1f1f1;border:1px solid #e2e2e2;border-left-color:#fbfbfb;border-bottom-color:#f6f6f6;border-radius:5px 5px 0 0"></div>
<div style="left:1018px;top:77px;width:80px;height:25px;background:#fff;border-radius:4px 4px 0 0"></div>
<div class="t" style="left:913px;top:83px;letter-spacing:-0.240px;">Power</div>
<div class="t" style="left:976px;top:83px;letter-spacing:-0.333px;">Energy</div>
<div class="t" style="left:1041px;top:83px;letter-spacing:-0.533px;">States</div>
<svg style="left:893px;top:83px" width="15" height="14" viewBox="0 0 15 14"><rect x="0" y="0" width="15" height="14" fill="#fff"/><path d="M1.500 0.5 v12 h13" fill="none" stroke="#222" stroke-width="1"/><path d="M2 1.500 l1.500 4.500 l2 -1 l2.500 3.500 l2.500 -3.500 l1.500 2 l2 -3" fill="none" stroke="#2a3aa8" stroke-width="1.100"/><path d="M2 6.500 l1.500 4 l2.500 -1.500 l2 1.500 l2.500 -2.500 l1.500 1.500 l2 -2" fill="none" stroke="#d8202c" stroke-width="1.100"/></svg>
<svg style="left:956px;top:83px" width="15" height="14" viewBox="0 0 15 14"><rect x="0" y="0" width="15" height="14" fill="#fff"/><path d="M1.500 0.5 v12 h13" fill="none" stroke="#222" stroke-width="1"/><path d="M2 1.500 l1.500 4.500 l2 -1 l2.500 3.500 l2.500 -3.500 l1.500 2 l2 -3" fill="none" stroke="#2a3aa8" stroke-width="1.100"/><path d="M2 6.500 l1.500 4 l2.500 -1.500 l2 1.500 l2.500 -2.500 l1.500 1.500 l2 -2" fill="none" stroke="#d8202c" stroke-width="1.100"/></svg>
<svg style="left:1021px;top:83px" width="15" height="14" viewBox="0 0 15 14"><rect x="0" y="0" width="15" height="14" fill="#fff"/><path d="M1.500 0.5 v12.500 h13" fill="none" stroke="#222" stroke-width="1"/><path d="M3 5 l3 -3 l2 2 l3 -3 l2 1" fill="none" stroke="#555" stroke-width=".9" stroke-dasharray="1.500 .8"/><rect x="3.500" y="8" width="2" height="5" fill="#e07a1a"/><rect x="7" y="6" width="2" height="7" fill="#2a5ad0"/><rect x="10.500" y="9" width="2" height="4" fill="#2aa02a"/></svg>
<svg style="left:1080px;top:85px" width="11" height="11" viewBox="0 0 11 11"><path d="M1 0.5 L3.2 0.5 L5.5 3.2 L7.8 0.5 L10 0.5 L10 2.6 L7.6 5.5 L10 8.4 L10 10.5 L7.8 10.5 L5.5 7.8 L3.2 10.5 L1 10.5 L1 8.4 L3.4 5.5 L1 2.6Z" fill="#fff" stroke="#777" stroke-width=".9"/></svg>
<svg style="left:1662px;top:82px" width="15" height="15" viewBox="0 0 15 15"><circle cx="5.500" cy="5.500" r="4.500" fill="#e8f4fc" stroke="#8ab0d0" stroke-width="1.200"/><path d="M9 9 l5 5" stroke="#8a6a4a" stroke-width="2"/><path d="M3 5.500 h5" stroke="#1a52c0" stroke-width="1.800"/><path d="M5.500 3 v5" stroke="#1a52c0" stroke-width="1.800"/></svg>
<svg style="left:1685px;top:82px" width="15" height="15" viewBox="0 0 15 15"><circle cx="5.500" cy="5.500" r="4.500" fill="#e8f4fc" stroke="#8ab0d0" stroke-width="1.200"/><path d="M9 9 l5 5" stroke="#8a6a4a" stroke-width="2"/><path d="M3 5.500 h5" stroke="#1a52c0" stroke-width="1.800"/></svg>
<svg style="left:1707px;top:81px" width="19" height="17" viewBox="0 0 19 17"><circle cx="11" cy="6" r="5" fill="#e8f4fc" stroke="#7aa4c8" stroke-width="1.400"/><path d="M14.500 9.500 l3.500 4" stroke="#c88a2a" stroke-width="2"/><rect x="0.5" y="7.500" width="8" height="8" fill="#fff" stroke="#1a1a8a"/><path d="M2.500 9.500 l4 4 M6.500 9.500 l-4 4" stroke="#1a1a8a" stroke-width="1"/></svg>
<svg style="left:1731px;top:87px" width="8" height="5" viewBox="0 0 8 5"><path d="M0 0 L8 0 L4 4.5Z" fill="#111"/></svg>
<div style="left:1744px;top:81px;width:1px;height:18px;background:#a0a0a0"></div>
<svg style="left:1754px;top:83px" width="14" height="13" viewBox="0 0 14 13"><rect x="1.500" y="0" width="3.500" height="3" fill="#111"/><rect x="9" y="0" width="3.500" height="3" fill="#111"/><rect x="0" y="3.500" width="6" height="9.500" rx="1" fill="#111"/><rect x="8" y="3.500" width="6" height="9.500" rx="1" fill="#111"/><rect x="5.500" y="5" width="3" height="4" fill="#111"/></svg>
<div style="left:1775px;top:81px;width:1px;height:18px;background:#a0a0a0"></div>
<svg style="left:1787px;top:84px" width="11" height="12" viewBox="0 0 11 12"><path d="M0 1 h4 M2 1 v9 h4 M2 5.500 h4" fill="none" stroke="#1a1a6a" stroke-width="1.200"/><rect x="6.500" y="4" width="3" height="3" fill="#fff" stroke="#1a1a6a"/><rect x="6.500" y="8.500" width="3" height="3" fill="#fff" stroke="#1a1a6a"/></svg>
<svg style="left:1815px;top:84px" width="12" height="6" viewBox="0 0 12 6"><path d="M0.500 0.500 h10.500 l-5.250 4.700z" fill="#fff" stroke="#666" stroke-width=".9"/></svg>
<svg style="left:1836px;top:84px" width="11" height="5" viewBox="0 0 11 5"><rect x="0.5" y="0.5" width="9" height="3" fill="#fff" stroke="#555"/></svg>
<svg style="left:1859px;top:84px" width="11" height="11" viewBox="0 0 11 11"><rect x="0.5" y="0.5" width="9" height="9" fill="#fff" stroke="#555"/><path d="M0.5 2.5 h9" stroke="#555"/></svg>
<div id="chart">
<div class="dk" style="top:5px;height:19px"></div>
<div class="dk" style="top:43px;height:19px"></div>
<div class="dk" style="top:81px;height:19px"></div>
<div class="dk" style="top:119px;height:19px"></div>
<div class="dk" style="top:157px;height:19px"></div>
<div class="dk" style="top:195px;height:19px"></div>
<div class="dk" style="top:233px;height:19px"></div>
<div class="dk" style="top:271px;height:19px"></div>
<div class="dk" style="top:309px;height:19px"></div>
<div class="dk" style="top:347px;height:19px"></div>
<div class="dk" style="top:385px;height:19px"></div>
<div class="dk" style="top:423px;height:19px"></div>
<div class="dk" style="top:461px;height:19px"></div>
<div class="dk" style="top:499px;height:19px"></div>
<div class="dk" style="top:537px;height:19px"></div>
<div class="dk" style="top:575px;height:19px"></div>
<div class="dk" style="top:613px;height:19px"></div>
<div class="dk" style="top:651px;height:19px"></div>
<div class="dk" style="top:689px;height:19px"></div>
<div class="dk" style="top:727px;height:19px"></div>
<div class="dk" style="top:765px;height:19px"></div>
<div class="dk" style="top:803px;height:19px"></div>
<div class="dk" style="top:841px;height:8px"></div>
<div class="rd" style="left:172px;width:39px"></div>
<div class="cn" style="left:173px;top:36px;height:12px"></div>
<div class="cn" style="left:211px;top:29px;height:19px"></div>
<div class="rd" style="left:290px;width:39px"></div>
<div class="cn" style="left:291px;top:36px;height:12px"></div>
<div class="cn" style="left:329px;top:29px;height:19px"></div>
<div class="rd" style="left:448px;width:39px"></div>
<div class="cn" style="left:449px;top:36px;height:12px"></div>
<div class="cn" style="left:487px;top:29px;height:19px"></div>
<div class="rd" style="left:552px;width:49px"></div>
<div class="cn" style="left:553px;top:36px;height:12px"></div>
<div class="cn" style="left:601px;top:29px;height:19px"></div>
<div class="rd" style="left:694px;width:39px"></div>
<div class="cn" style="left:695px;top:36px;height:12px"></div>
<div class="cn" style="left:733px;top:29px;height:19px"></div>
<div class="rd" style="left:898px;width:43px"></div>
<div class="cn" style="left:899px;top:36px;height:12px"></div>
<div class="cn" style="left:941px;top:29px;height:19px"></div>
<div class="gn" style="left:114px;width:59px"></div>
<div class="gn" style="left:211px;width:80px"></div>
<div class="gn" style="left:329px;width:120px"></div>
<div class="gn" style="left:487px;width:66px"></div>
<div class="gn" style="left:601px;width:94px"></div>
<div class="gn" style="left:733px;width:166px"></div>
<div class="gn" style="left:940px;width:33px"></div>
<div class="vline"></div><div class="axis"></div>
<div style="left:114px;top:848px;width:859px;height:1px;background:rgba(0,90,0,.55)"></div>
<div class="tk" style="left:114px;height:7px"></div>
<div class="tk" style="left:128px;height:4px"></div>
<div class="tk" style="left:142px;height:4px"></div>
<div class="tk" style="left:156px;height:4px"></div>
<div class="tk" style="left:171px;height:4px"></div>
<div class="tk" style="left:185px;height:4px"></div>
<div class="tk" style="left:199px;height:4px"></div>
<div class="tk" style="left:214px;height:4px"></div>
<div class="tk" style="left:228px;height:4px"></div>
<div class="tk" style="left:242px;height:4px"></div>
<div class="tk" style="left:257px;height:7px"></div>
<div class="tk" style="left:271px;height:4px"></div>
<div class="tk" style="left:285px;height:4px"></div>
<div class="tk" style="left:299px;height:4px"></div>
<div class="tk" style="left:314px;height:4px"></div>
<div class="tk" style="left:328px;height:4px"></div>
<div class="tk" style="left:342px;height:4px"></div>
<div class="tk" style="left:357px;height:4px"></div>
<div class="tk" style="left:371px;height:4px"></div>
<div class="tk" style="left:385px;height:4px"></div>
<div class="tk" style="left:400px;height:7px"></div>
<div class="tk" style="left:414px;height:4px"></div>
<div class="tk" style="left:428px;height:4px"></div>
<div class="tk" style="left:442px;height:4px"></div>
<div class="tk" style="left:457px;height:4px"></div>
<div class="tk" style="left:471px;height:4px"></div>
<div class="tk" style="left:485px;height:4px"></div>
<div class="tk" style="left:500px;height:4px"></div>
<div class="tk" style="left:514px;height:4px"></div>
<div class="tk" style="left:528px;height:4px"></div>
<div class="tk" style="left:543px;height:7px"></div>
<div class="tk" style="left:557px;height:4px"></div>
<div class="tk" style="left:571px;height:4px"></div>
<div class="tk" style="left:585px;height:4px"></div>
<div class="tk" style="left:600px;height:4px"></div>
<div class="tk" style="left:614px;height:4px"></div>
<div class="tk" style="left:628px;height:4px"></div>
<div class="tk" style="left:643px;height:4px"></div>
<div class="tk" style="left:657px;height:4px"></div>
<div class="tk" style="left:671px;height:4px"></div>
<div class="tk" style="left:686px;height:7px"></div>
<div class="tk" style="left:700px;height:4px"></div>
<div class="tk" style="left:714px;height:4px"></div>
<div class="tk" style="left:728px;height:4px"></div>
<div class="tk" style="left:743px;height:4px"></div>
<div class="tk" style="left:757px;height:4px"></div>
<div class="tk" style="left:771px;height:4px"></div>
<div class="tk" style="left:786px;height:4px"></div>
<div class="tk" style="left:800px;height:4px"></div>
<div class="tk" style="left:814px;height:4px"></div>
<div class="tk" style="left:829px;height:7px"></div>
<div class="tk" style="left:843px;height:4px"></div>
<div class="tk" style="left:857px;height:4px"></div>
<div class="tk" style="left:871px;height:4px"></div>
<div class="tk" style="left:886px;height:4px"></div>
<div class="tk" style="left:900px;height:4px"></div>
<div class="tk" style="left:914px;height:4px"></div>
<div class="tk" style="left:929px;height:4px"></div>
<div class="tk" style="left:943px;height:4px"></div>
<div class="tk" style="left:957px;height:4px"></div>
<div class="tk" style="left:972px;height:7px"></div>
<div class="tl" style="left:94px">0</div>
<div class="tl" style="left:237px">5</div>
<div class="tl" style="left:380px">10</div>
<div class="tl" style="left:523px">15</div>
<div class="tl" style="left:666px">20</div>
<div class="tl" style="left:809px">25</div>
<div class="tl" style="left:932px;text-align:right">30</div>
<div class="tt">Time&nbsp;&nbsp;(s)</div>
<div class="lb" style="left:35px;top:6px">Power Mode</div>
<div class="lb" style="left:53px;top:25px">AM</div>
<div class="lb" style="left:53px;top:44px;letter-spacing:-0.4px">LPMx</div>
<div style="left:23px;top:10px;width:9px;height:9px;background:linear-gradient(#fff,#dfe6f2);border:1px solid #9aa8be"></div>
<div style="left:25px;top:14px;width:5px;height:1px;background:#223a6a"></div>
<svg style="left:3px;top:4px" width="12" height="8" viewBox="0 0 12 8"><path d="M0.5 5.500 L5.500 1 L10.500 5.500" fill="none" stroke="#4c466c" stroke-width="1"/></svg>
</div>
<div style="left:1863px;top:102px;width:17px;height:890px;background:#f0f0f0"></div>
<div class="thumbv" style="left:1865px;top:120px;width:14px;height:24px;"></div>
<svg style="left:1868px;top:109px" width="8" height="5" viewBox="0 0 8 5"><path d="M0 4.5 L4 0.5 L8 4.5Z" fill="#404040"/></svg>
<svg style="left:1868px;top:981px" width="8" height="5" viewBox="0 0 8 5"><path d="M0 0.5 L8 0.5 L4 4.5Z" fill="#404040"/></svg>
<svg style="left:1868px;top:128px" width="8" height="8" viewBox="0 0 8 8"><path d="M0 0.5 h8 M0 3.5 h8 M0 6.5 h8" stroke="#555" stroke-width="1"/><path d="M0 1.5 h8 M0 4.5 h8 M0 7.5 h8" stroke="#fff" stroke-width="1" opacity=".7"/></svg>
<div style="left:1880px;top:102px;width:2px;height:906px;background:#fafafa"></div>
<div style="left:890px;top:992px;width:992px;height:16px;background:#f0f0f0"></div>
<svg style="left:892px;top:993px" width="12" height="12" viewBox="0 0 12 12"><path d="M6 0.800 L11.300 10.800 H0.700Z" fill="#fbd98a" stroke="#d89a2a" stroke-width="1" stroke-linejoin="round"/><rect x="5.300" y="4" width="1.500" height="3.500" fill="#6a4a10"/><rect x="5.300" y="8.300" width="1.500" height="1.500" fill="#6a4a10"/></svg>
<div class="t" style="left:915px;top:993px;letter-spacing:-0.075px;color:#d81e2c">Warning: ...</div>
<div style="left:981px;top:993px;width:15px;height:13px;border:1px solid #707070;border-radius:3px;background:linear-gradient(#fff,#ddd)"></div>
<div class="t" style="left:985px;top:992px;font-size:10px;font-weight:bold;color:#223">?</div>
<div class="t" style="left:1754px;top:993px;letter-spacing:-0.243px;">Showing 6,132 records</div>
<div style="left:1885px;top:77px;width:30px;height:80px;background:linear-gradient(270deg,#ece9d8,#e9e8e0 70%,#e8e8e4);border:1px solid #dddbd0;box-shadow:0 0 0 1px #f4f4f0;border-radius:6px 0 0 6px"></div>
<svg style="left:1891px;top:83px" width="18" height="2" viewBox="0 0 18 2"><rect x="0" y="0" width="2" height="1" fill="#8e8e80"/><rect x="1" y="1" width="2" height="1" fill="#fff"/><rect x="5" y="0" width="2" height="1" fill="#8e8e80"/><rect x="6" y="1" width="2" height="1" fill="#fff"/><rect x="10" y="0" width="2" height="1" fill="#8e8e80"/><rect x="11" y="1" width="2" height="1" fill="#fff"/><rect x="15" y="0" width="2" height="1" fill="#8e8e80"/><rect x="16" y="1" width="2" height="1" fill="#fff"/></svg>
<svg style="left:1895px;top:93px" width="10" height="9" viewBox="0 0 10 9"><rect x="3.5" y="0.5" width="6" height="4.5" fill="#fff" stroke="#555"/><path d="M3.5 1.5 h6" stroke="#555"/><rect x="0.5" y="3.5" width="6" height="4.5" fill="#fff" stroke="#555"/><path d="M0.5 4.5 h6" stroke="#555"/></svg>
<svg style="left:1892px;top:114px" width="16" height="11" viewBox="0 0 16 11"><rect x="0" y="0" width="4" height="2" fill="#2a4aa8"/><rect x="5" y="0" width="3" height="2" fill="#2a4aa8"/><rect x="9" y="0" width="3" height="2" fill="#2a4aa8"/><rect x="13" y="0" width="2" height="2" fill="#2a4aa8"/><rect x="0" y="4" width="4" height="2" fill="#2a4aa8"/><rect x="5" y="4" width="3" height="2" fill="#2a4aa8"/><rect x="9" y="4" width="2" height="2" fill="#2a4aa8"/><rect x="12" y="4" width="2" height="2" fill="#2a4aa8"/><rect x="0" y="8" width="12" height="2" fill="#2a4aa8"/></svg>
<svg style="left:1895px;top:133px" width="11" height="15" viewBox="0 0 11 15"><defs><linearGradient id="cy" x1="0" x2="1"><stop offset="0" stop-color="#4a7ad0"/><stop offset=".4" stop-color="#b4d0f4"/><stop offset="1" stop-color="#3a6ac0"/></linearGradient></defs><path d="M0.5 2.5 v10 q0 2 4.500 2 q4.500 0 4.500 -2 v-10z" fill="url(#cy)" stroke="#2a52a8"/><ellipse cx="5" cy="2.5" rx="4.500" ry="2" fill="#9cc0f0" stroke="#2a52a8"/></svg>
<div style="left:1190px;top:1012px;width:1px;height:21px;background:#a8a8a8"></div>
<div style="left:1294px;top:1012px;width:1px;height:21px;background:#a8a8a8"></div>
<div style="left:1392px;top:1012px;width:1px;height:21px;background:#a8a8a8"></div>
<div class="t" style="left:1198px;top:1015px;letter-spacing:-0.037px;">Writable</div>
<div class="t" style="left:1302px;top:1015px;letter-spacing:-0.192px;">Smart Insert</div>
<div class="t" style="left:1400px;top:1015px;letter-spacing:-0.471px;">112 : 1</div>
<div class="t" style="left:1786.3px;top:1017px;letter-spacing:-0.283px;">Full License</div>
<div class="t" style="left:1858.5px;top:1017px;letter-spacing:-0.800px;">LE</div>
<svg style="left:1489px;top:1016px" width="3" height="16" viewBox="0 0 3 16"><rect x="0.5" y="0" width="1.500" height="2" fill="#9c9c9c"/><rect x="0.5" y="4.5" width="1.500" height="2" fill="#9c9c9c"/><rect x="0.5" y="9" width="1.500" height="2" fill="#9c9c9c"/><rect x="0.5" y="13.5" width="1.500" height="2" fill="#9c9c9c"/></svg>
<svg style="left:1779px;top:1016px" width="3" height="16" viewBox="0 0 3 16"><rect x="0.5" y="0" width="1.500" height="2" fill="#9c9c9c"/><rect x="0.5" y="4.5" width="1.500" height="2" fill="#9c9c9c"/><rect x="0.5" y="9" width="1.500" height="2" fill="#9c9c9c"/><rect x="0.5" y="13.5" width="1.500" height="2" fill="#9c9c9c"/></svg>
<svg style="left:1851px;top:1016px" width="3" height="16" viewBox="0 0 3 16"><rect x="0.5" y="0" width="1.500" height="2" fill="#9c9c9c"/><rect x="0.5" y="4.5" width="1.500" height="2" fill="#9c9c9c"/><rect x="0.5" y="9" width="1.500" height="2" fill="#9c9c9c"/><rect x="0.5" y="13.5" width="1.500" height="2" fill="#9c9c9c"/></svg>
<svg style="left:1875px;top:1016px" width="3" height="16" viewBox="0 0 3 16"><rect x="0.5" y="0" width="1.500" height="2" fill="#9c9c9c"/><rect x="0.5" y="4.5" width="1.500" height="2" fill="#9c9c9c"/><rect x="0.5" y="9" width="1.500" height="2" fill="#9c9c9c"/><rect x="0.5" y="13.5" width="1.500" height="2" fill="#9c9c9c"/></svg>
</body></html>
